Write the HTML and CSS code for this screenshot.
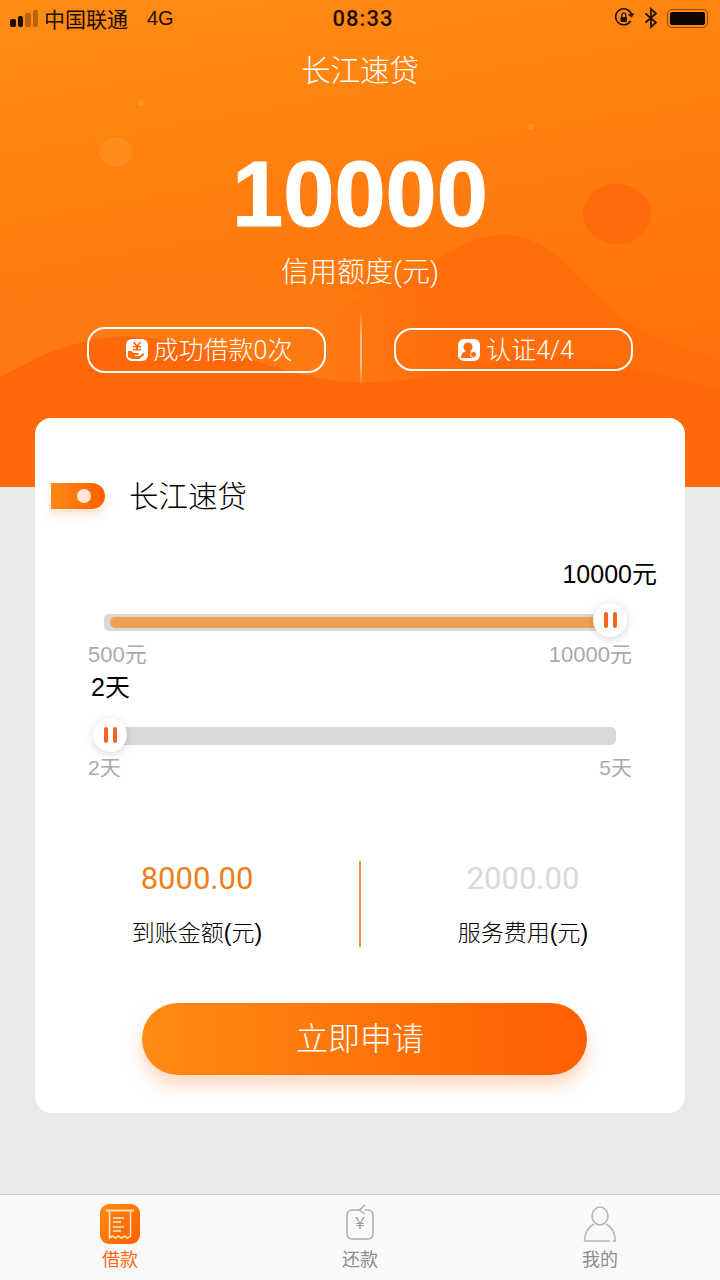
FILE: index.html
```html
<!DOCTYPE html>
<html lang="zh-CN">
<head>
  <meta charset="UTF-8" />
  <meta name="viewport" content="width=device-width, initial-scale=1.0"/>
  <title>长江速贷</title>
  <link rel="stylesheet" href="styles.css">
</head>
<body>
  <div class="hero">
    <svg class="hero-bg" width="720" height="487" viewBox="0 0 720 487">
      <defs>
        <linearGradient id="hillgrad" gradientUnits="userSpaceOnUse" x1="330" y1="0" x2="440" y2="0">
          <stop offset="0" stop-color="#ff6e0a" stop-opacity="0"/>
          <stop offset="1" stop-color="#ff6e0a"/>
        </linearGradient>
      </defs>
      <ellipse cx="617" cy="214" rx="34" ry="30" fill="#ff6a0a"/>
      <ellipse cx="116" cy="152" rx="17" ry="15" fill="#ff9a2c" opacity="0.4"/>
      <circle cx="141" cy="103" r="3" fill="#ff9f3c" opacity="0.6"/>
      <circle cx="531" cy="127" r="3" fill="#ff9f3c" opacity="0.6"/>
      <path d="M0 287C60 300 120 265 184 265C240 265 270 280 321 287C370 296 410 298 450 300L720 420V487H0Z" fill="#ff7a10"/>
      <path d="M300 320C370 300 430 262 459 247C480 236 505 230 530 240C570 256 590 295 620 317C650 338 690 352 720 360V487H300Z" fill="url(#hillgrad)"/>
      <path d="M0 377C25 365 45 352 69 346C95 338 115 335 138 337C170 340 200 345 230 353C265 364 295 375 330 380C370 386 420 380 470 368C510 358 550 354 597 362C640 370 685 380 720 390V487H0Z" fill="#ff6808"/>
    </svg>

    <div class="statusbar">
      <div class="status-left">
        <span class="signal"><i class="on"></i><i class="on"></i><i></i><i></i></span>
        <span>中国联通</span>
        <span class="net">4G</span>
      </div>
      <div class="status-time">08:33</div>
      <div class="status-right">
        <svg width="22" height="22" viewBox="0 0 22 22" fill="none" stroke="#1c0d00" stroke-width="1.6">
          <path d="M17.5 14A8 8 0 1 1 18.5 8"/>
          <path d="M20.5 6.5L18.5 9.5L15.8 7.4" stroke-width="1.4"/>
          <rect x="7.5" y="10" width="6.5" height="5" rx="1" fill="#1c0d00" stroke="none"/>
          <path d="M8.8 10V8.2a2 2 0 0 1 4 0V10" stroke-width="1.2"/>
        </svg>
        <svg width="14" height="22" viewBox="0 0 14 22" fill="none" stroke="#1c0d00" stroke-width="1.7">
          <path d="M1.5 6.5L12 15.5L7 20V2L12 6.5L1.5 15.5"/>
        </svg>
        <span class="battery"><span class="battery-level"></span></span>
      </div>
    </div>

    <div class="title">长江速贷</div>
    <div class="amount">10000</div>
    <div class="amount-label">信用额度(元)</div>

    <div class="badges">
      <div class="badge badge-tall">
        <svg class="badge-icon" width="22" height="22" viewBox="0 0 22 22">
          <rect width="22" height="22" rx="6" fill="#fff"/>
          <path d="M2 12h3l3 2h5l-1 2h-3v1h4l5-3v2l-5 4H6l-4-2Z" fill="#ff6a0a"/>
          <path d="M8 2.500l3 3.500 3-3.500 1 1-2.500 3.500H15v1.500h-3V10h3v1.500H7V10h3V8.500H7V7h2.500L7 3.500Z" fill="#ff6a0a"/>
        </svg>
        <span>成功借款0次</span>
      </div>
      <div class="badges-line"></div>
      <div class="badge">
        <svg class="badge-icon" width="22" height="22" viewBox="0 0 22 22">
          <rect width="22" height="22" rx="6" fill="#fff"/>
          <circle cx="10" cy="8" r="4.500" fill="#ff6a0a"/>
          <path d="M3 19c0-5 3-7 7-7s7 2 7 7Z" fill="#ff6a0a"/>
          <circle cx="15.500" cy="15.500" r="3" fill="#ff6a0a" stroke="#fff"/>
        </svg>
        <span>认证4/4</span>
      </div>
    </div>
  </div>

  <div class="card">
    <div class="card-head">
      <div class="toggle"><span class="toggle-dot"></span></div>
      <div class="card-title">长江速贷</div>
    </div>

    <div class="slider-value right">10000元</div>
    <div class="slider slider-money">
      <div class="slider-fill"></div>
      <div class="thumb thumb-end"><i></i><i></i></div>
    </div>
    <div class="slider-range"><span>500元</span><span>10000元</span></div>

    <div class="slider-value days">2天</div>
    <div class="slider slider-days">
      <div class="thumb thumb-start"><i></i><i></i></div>
    </div>
    <div class="slider-range range-days"><span>2天</span><span>5天</span></div>

    <div class="stats">
      <div class="stat">
        <div class="stat-num orange">8000.00</div>
        <div class="stat-name">到账金额(元)</div>
      </div>
      <div class="stats-line"></div>
      <div class="stat">
        <div class="stat-num pale">2000.00</div>
        <div class="stat-name">服务费用(元)</div>
      </div>
    </div>

    <button class="apply">立即申请</button>
  </div>

  <div class="tabbar">
    <div class="tab active">
      <svg width="40" height="40" viewBox="0 0 40 40" fill="none">
        <defs>
          <linearGradient id="tabgrad" x1="0" y1="0" x2="1" y2="1">
            <stop offset="0" stop-color="#ff8a14"/>
            <stop offset="1" stop-color="#ff6000"/>
          </linearGradient>
        </defs>
        <rect width="40" height="40" rx="9" fill="url(#tabgrad)"/>
        <path d="M6.500 6.500H33.500" stroke="#ffd9b0" stroke-width="2" stroke-linecap="round"/>
        <path d="M9.500 7V34L12.500 32L15.500 34L18.500 32L21.500 34L24.500 32L27.500 34L30.500 32V7" stroke="#ffe6cc" stroke-width="1.500"/>
        <path d="M13 14H24M13 18H21M13 23H24M13 27H21" stroke="#ffe6cc" stroke-width="1.500"/>
      </svg>
      <span>借款</span>
    </div>
    <div class="tab">
      <div class="tab-icon">
        <svg width="40" height="40" viewBox="0 0 40 40" fill="none" stroke="#ababab" stroke-width="1.500">
          <path d="M20 6H12a5 5 0 0 0-5 5v19a5 5 0 0 0 5 5h16a5 5 0 0 0 5-5V11a5 5 0 0 0-5-5h-3"/>
          <path d="M25 1L19.500 6L25 10"/>
        </svg>
        <span class="yen">¥</span>
      </div>
      <span>还款</span>
    </div>
    <div class="tab">
      <svg width="40" height="40" viewBox="0 0 40 40" fill="none" stroke="#b4b4b4" stroke-width="1.500">
        <ellipse cx="20" cy="12" rx="8" ry="9"/>
        <path d="M14 20C8 23 5 29 4.500 37H30M33 37H35.500C35 29 32 23 26 20"/>
      </svg>
      <span>我的</span>
    </div>
  </div>
</body>
</html>
```

FILE: styles.css
```css
* {
  box-sizing: border-box;
}

body {
  margin: 0;
  width: 720px;
  height: 1280px;
  overflow: hidden;
  display: flex;
  flex-direction: column;
  background-color: #ebeae8;
  color: #000;
  font-family: "Liberation Sans", "Noto Sans CJK SC", sans-serif;
}

.hero {
  position: relative;
  height: 487px;
  flex-shrink: 0;
  color: #fff;
  background: linear-gradient(170deg, #ff8c14 0%, #ff7c0e 45%, #ff6a08 100%);
}

.hero-bg {
  position: absolute;
  left: 0;
  top: 0;
}

.statusbar,
.title,
.amount,
.amount-label,
.badges {
  position: relative;
}

.statusbar {
  height: 36px;
  padding: 0 12px 0 10px;
  display: flex;
  align-items: center;
  justify-content: space-between;
  color: #1c0d00;
  font-size: 21px;
}

.status-left {
  width: 270px;
  display: flex;
  align-items: center;
  gap: 6px;
}

.signal {
  display: flex;
  align-items: flex-end;
  gap: 2px;
}

.signal i {
  width: 5.500px;
  background-color: #b9620c;
  border-radius: 2px;
}

.signal i.on {
  background-color: #1c0d00;
}

.signal i:nth-child(1) { height: 8px; }
.signal i:nth-child(2) { height: 11px; }
.signal i:nth-child(3) { height: 14px; }
.signal i:nth-child(4) { height: 17px; }

.net {
  margin-left: 13px;
  font-size: 20px;
}

.status-time {
  font-family: Roboto, "Liberation Sans", sans-serif;
  font-size: 22px;
  font-weight: 500;
  letter-spacing: 1px;
}

.status-right {
  width: 262px;
  display: flex;
  align-items: center;
  justify-content: flex-end;
  gap: 9px;
}

.battery {
  width: 41px;
  height: 19px;
  padding: 2px;
  border: 1.500px solid #8a4a08;
  border-radius: 5px;
}

.battery-level {
  display: block;
  height: 100%;
  background-color: #0d0600;
  border-radius: 2px;
}

.title {
  margin-top: 17px;
  line-height: 36px;
  font-size: 29.500px;
  font-weight: 300;
  text-align: center;
}

.amount {
  margin-top: 59px;
  line-height: 92px;
  font-size: 92px;
  font-weight: bold;
  text-align: center;
  -webkit-text-stroke: 1px #fff;
}

.amount-label {
  margin-top: 15px;
  line-height: 36px;
  font-family: Roboto, "Noto Sans CJK SC", sans-serif;
  font-size: 28px;
  font-weight: 300;
  text-align: center;
}

.badges {
  margin-top: 21px;
  height: 75px;
  display: flex;
  align-items: center;
  padding-left: 87px;
}

.badge {
  width: 239px;
  height: 43px;
  padding: 0 0 3px 5px;
  display: flex;
  align-items: center;
  justify-content: center;
  gap: 6px;
  border: 2px solid #fff;
  border-radius: 18px;
  font-family: Roboto, "Noto Sans CJK SC", sans-serif;
  font-size: 25px;
  font-weight: 300;
}

.badge-icon {
  margin-bottom: -3px;
}

.badge-tall {
  height: 46px;
}

.badges-line {
  width: 2px;
  height: 75px;
  margin: 0 32px 0 34px;
  background: linear-gradient(180deg, rgba(255,255,255,0), rgba(255,255,255,0.55) 30%, rgba(255,255,255,0.55) 70%, rgba(255,255,255,0));
}

.card {
  position: relative;
  margin: -69px 35px 0;
  padding: 65px 0 38px;
  background-color: #fff;
  border-radius: 16px;
}

.card-head {
  height: 26px;
  padding-left: 16px;
  display: flex;
  align-items: center;
  gap: 24px;
}

.toggle {
  width: 54px;
  height: 26px;
  padding-right: 14px;
  display: flex;
  align-items: center;
  justify-content: flex-end;
  border-radius: 0 13px 13px 0;
  background: linear-gradient(90deg, #ff8a14, #ff5f00);
  box-shadow: 0 6px 8px rgba(255, 120, 20, 0.22);
}

.toggle-dot {
  width: 14px;
  height: 14px;
  border-radius: 50%;
  background-color: #ffe9d8;
}

.card-title {
  padding-bottom: 4px;
  font-size: 29.500px;
  font-weight: 300;
}

.slider-value {
  margin-top: 50px;
  line-height: 30px;
  font-size: 25px;
}

.slider-value.right {
  padding-right: 28px;
  text-align: right;
}

.slider-value.days {
  margin-top: 4px;
  padding-left: 56px;
}

.slider {
  position: relative;
  margin-top: 25px;
  margin-left: 69px;
  width: 512px;
  background-color: #d9d9db;
  border-radius: 5px;
}

.slider-money {
  height: 17px;
  padding: 3px 16px 3px 6px;
}

.slider-days {
  height: 18px;
  margin-left: 65px;
  width: 516px;
}

.slider-fill {
  height: 11px;
  background-color: #f0a050;
  border-radius: 5px;
}

.thumb {
  position: absolute;
  top: -11px;
  width: 34px;
  height: 34px;
  display: flex;
  align-items: center;
  justify-content: center;
  gap: 5px;
  background-color: #fff;
  border-radius: 50%;
  box-shadow: 0 2px 8px rgba(0, 0, 0, 0.16);
}

.thumb i {
  width: 4px;
  height: 16px;
  background-color: #f4661a;
  border-radius: 2px;
}

.thumb-end {
  right: -11px;
}

.thumb-start {
  left: -7px;
  top: -9px;
}

.slider-range {
  margin-top: 11px;
  padding: 0 53px;
  display: flex;
  justify-content: space-between;
  line-height: 26px;
  font-size: 22px;
  color: #aaa;
}

.range-days {
  margin-top: 10px;
  font-size: 21px;
}

.stats {
  margin-top: 80px;
  height: 86px;
  display: flex;
}

.stat {
  flex: 1;
  text-align: center;
}

.stats-line {
  width: 2px;
  background-color: #e8913a;
}

.stat-num {
  line-height: 36px;
  font-family: Roboto, "Liberation Sans", sans-serif;
  font-size: 31px;
}

.orange {
  color: #ee7f1a;
}

.pale {
  color: #d9d9d9;
}

.stat-name {
  margin-top: 20px;
  line-height: 32px;
  font-size: 23px;
  font-weight: 300;
}

.apply {
  display: block;
  width: 445px;
  height: 72px;
  margin: 56px 0 0 107px;
  padding: 0 9px 6px 0;
  border: none;
  border-radius: 36px;
  background: linear-gradient(90deg, #ff8a14, #ff5f00);
  box-shadow: 0 10px 18px rgba(255, 120, 30, 0.3);
  color: #fff;
  font-family: inherit;
  font-size: 32px;
  font-weight: 300;
}

.tabbar {
  margin-top: auto;
  height: 86px;
  display: flex;
  justify-content: space-around;
  background-color: #f9f9f9;
  border-top: 1px solid #c8c8c8;
}

.tab {
  width: 240px;
  padding-top: 9px;
  display: flex;
  flex-direction: column;
  align-items: center;
  gap: 4px;
  font-size: 18px;
  line-height: 24px;
  color: #8c8c8c;
}

.tab.active {
  color: #ff6a14;
}

.tab svg {
  display: block;
}

.tab-icon {
  position: relative;
}

.yen {
  position: absolute;
  left: 0;
  right: 0;
  top: 8px;
  text-align: center;
  font-size: 16px;
  color: #9c9c9c;
}
```
